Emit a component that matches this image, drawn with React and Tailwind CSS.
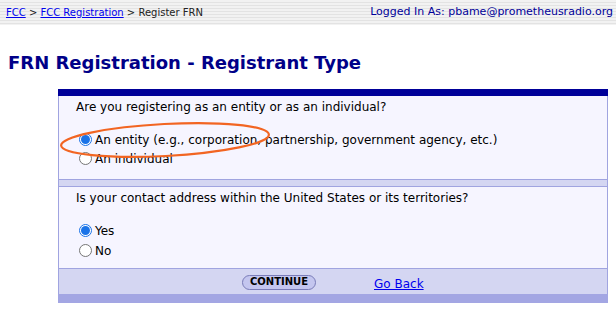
import React from 'react';

function Radio({ checked }) {
  return (
    <span
      className={
        'inline-flex items-center justify-center w-[13px] h-[13px] rounded-full border shrink-0 ' +
        (checked ? 'border-[#1a73e8] bg-white' : 'border-[#767676] bg-white')
      }
    >
      {checked && <span className="w-[9px] h-[9px] rounded-full bg-[#1a73e8]" />}
    </span>
  );
}

function Option({ checked, label }) {
  return (
    <label className="flex items-center gap-[3px] h-[19px]">
      <Radio checked={checked} />
      <span>{label}</span>
    </label>
  );
}

export default function App() {
  return (
    <div
      className="relative w-[616px] h-[311px] bg-white text-black overflow-hidden"
      style={{ fontFamily: '"DejaVu Sans", Verdana, sans-serif' }}
    >
      <div className="h-[25px] flex items-center justify-between pl-[6px] pr-[3px] bg-[repeating-linear-gradient(to_bottom,#f2f2f2_0px,#f2f2f2_2px,#e3e3e3_2px,#e3e3e3_3px)]">
        <div className="text-[10px] text-[#222]">
          <a href="#" className="text-[#0000ee] underline">FCC</a> &gt;{' '}
          <a href="#" className="text-[#0000ee] underline">FCC Registration</a> &gt; Register FRN
        </div>
        <div className="text-[11px] text-[#000099]">Logged In As: pbame@prometheusradio.org</div>
      </div>

      <h1 className="mt-[26px] ml-[8px] text-[18px] font-bold text-[#000088] leading-[24px]">
        FRN Registration - Registrant Type
      </h1>

      <div className="mt-[14px] ml-[58px] w-[550px] text-[12px]">
        <div className="h-[7px] bg-[#000099]" />
        <div className="h-[83px] border-x border-[#a0a4e0] bg-[#f6f5ff] pl-[17px] pt-[4px]">
          <div className="leading-[15px]">Are you registering as an entity or as an individual?</div>
          <div className="mt-[15px] pl-[3px]">
            <Option checked label="An entity (e.g., corporation, partnership, government agency, etc.)" />
            <Option label="An individual" />
          </div>
        </div>
        <div className="h-[8px] bg-[#d4d6f2] border border-[#a0a4e0]" />
        <div className="h-[81px] border-x border-[#a0a4e0] bg-[#f6f5ff] pl-[17px] pt-[4px]">
          <div className="leading-[15px]">Is your contact address within the United States or its territories?</div>
          <div className="mt-[15px] pl-[3px] flex flex-col gap-[1px]">
            <Option checked label="Yes" />
            <Option label="No" />
          </div>
        </div>
        <div className="h-[26px] bg-[#d4d6f2] border-t border-x border-[#a0a4e0] flex items-start">
          <div className="w-[315px] pl-[183px] pt-[3px]">
            <button className="h-[15px] w-[74px] rounded-full border border-[#7a7cb8] bg-[#c4c6ef] text-[10px] font-bold leading-[12px] text-black">
              CONTINUE
            </button>
          </div>
          <a href="#" className="pt-[6px] text-[12px] text-[#0000ee] underline">Go Back</a>
        </div>
        <div className="h-[9px] bg-[#a3a6e3]" />
      </div>

      <svg className="absolute left-[58px] top-[115px]" width="216" height="50" viewBox="0 0 216 50">
        <ellipse
          cx="107"
          cy="25"
          rx="104"
          ry="16"
          fill="none"
          stroke="#f26522"
          strokeWidth="2.2"
          transform="rotate(-3 107 25)"
        />
      </svg>
    </div>
  );
}
